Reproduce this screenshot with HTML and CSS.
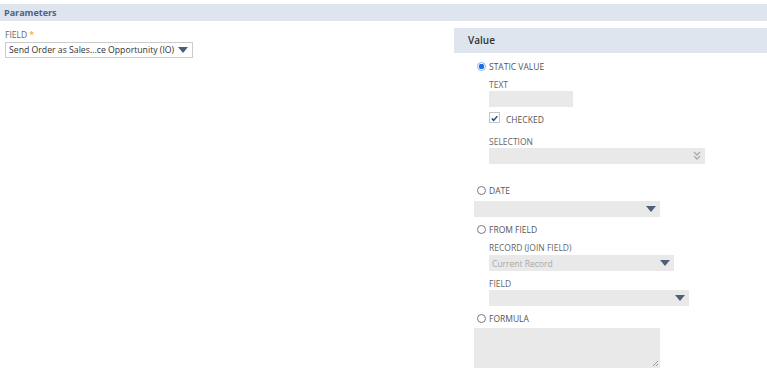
FILE: index.html
```html
<!DOCTYPE html>
<html lang="en">
<head>
    <meta charset="UTF-8">
    <title>Parameters</title>
    <link rel="stylesheet" href="styles.css">
</head>
<body>
    <!-- Section header -->
    <div class="section-bar">Parameters</div>

    <div class="columns">
        <!-- Left column: field picker -->
        <div class="left-col">
            <div class="label">FIELD <span class="req">*</span></div>
            <div class="select main-select">
                <span class="select-text">Send Order as Sales...ce Opportunity (IO)</span>
                <svg class="arrow" width="10" height="6" viewBox="0 0 10 6"><path d="M0 0H10L5 6Z" fill="#4d5f79"/></svg>
            </div>
        </div>

        <!-- Right column: value options -->
        <div class="right-col">
            <div class="value-head">Value</div>
            <div class="value-body">
                <div class="radio-row r-static">
                    <span class="radio checked"></span>
                    <span class="radio-label">STATIC VALUE</span>
                </div>
                <div class="indent">
                    <div class="label l-text">TEXT</div>
                    <div class="input w-text"></div>

                    <div class="check-row">
                        <span class="checkbox">
                            <svg width="11" height="11" viewBox="0 0 11 11"><path d="M2.2 5.6L4.4 7.8L9 2.6" stroke="#23468a" stroke-width="1.8" fill="none"/></svg>
                        </span>
                        <span class="check-label">CHECKED</span>
                    </div>

                    <div class="label l-selection">SELECTION</div>
                    <div class="select disabled w-selection">
                        <svg class="chevrons" width="8" height="9" viewBox="0 0 8 9"><path d="M1 1L4 4L7 1M1 5L4 8L7 5" stroke="#aaa" stroke-width="1.3" fill="none"/></svg>
                    </div>
                </div>

                <div class="radio-row r-date">
                    <span class="radio"></span>
                    <span class="radio-label">DATE</span>
                </div>
                <div class="select disabled w-date">
                    <svg class="arrow" width="10" height="6" viewBox="0 0 10 6"><path d="M0 0H10L5 6Z" fill="#4d5f79"/></svg>
                </div>

                <div class="radio-row r-from">
                    <span class="radio"></span>
                    <span class="radio-label">FROM FIELD</span>
                </div>
                <div class="indent">
                    <div class="label l-record">RECORD (JOIN FIELD)</div>
                    <div class="select disabled w-record">
                        <span class="placeholder">Current Record</span>
                        <svg class="arrow" width="10" height="6" viewBox="0 0 10 6"><path d="M0 0H10L5 6Z" fill="#4d5f79"/></svg>
                    </div>

                    <div class="label l-field">FIELD</div>
                    <div class="select disabled w-field">
                        <svg class="arrow" width="10" height="6" viewBox="0 0 10 6"><path d="M0 0H10L5 6Z" fill="#4d5f79"/></svg>
                    </div>
                </div>

                <div class="radio-row r-formula">
                    <span class="radio"></span>
                    <span class="radio-label">FORMULA</span>
                </div>
                <div class="textarea">
                    <svg class="grip" width="7" height="7" viewBox="0 0 7 7"><path d="M6 1L1 6M6 4L4 6" stroke="#999" stroke-width="1" fill="none"/></svg>
                </div>
            </div>
        </div>
    </div>
</body>
</html>
```

FILE: styles.css
```css
body {
    margin: 0;
    padding-top: 4px;
    font-family: "Open Sans", Arial, sans-serif;
    background: #fff;
    color: #333;
}

/* Section header bar */
.section-bar {
    height: 17px;
    line-height: 17px;
    background-color: #dfe5ef;
    color: #4a6285;
    font-size: 9px;
    font-weight: bold;
    padding-left: 4px;
}

.columns {
    display: flex;
}

.left-col {
    width: 449px;
    padding-left: 5px;
    padding-top: 8px;
}

.right-col {
    flex: 1;
    padding-top: 7px;
}

/* Labels */
.label {
    font-size: 8.5px;
    line-height: 12px;
    height: 12px;
    color: #666;
    text-transform: uppercase;
}

.req {
    color: #f39c12;
    font-size: 9px;
}

/* Selects and inputs */
.select {
    position: relative;
    height: 16px;
    box-sizing: border-box;
    display: flex;
    align-items: center;
}

.main-select {
    width: 188px;
    margin-top: 1px;
    border: 1px solid #ccc;
    padding-left: 3px;
}

.select-text {
    font-size: 8.7px;
    color: #333;
    white-space: nowrap;
}

.arrow {
    position: absolute;
    right: 4px;
    top: 5px;
}

.main-select .arrow {
    top: 4px;
}

.disabled {
    background-color: #e9e9e9;
    padding-left: 3px;
}

.placeholder {
    font-size: 8.5px;
    color: #a8a8a8;
}

.chevrons {
    position: absolute;
    right: 4px;
    top: 3px;
}

.input {
    height: 16px;
    background-color: #e9e9e9;
}

/* Value panel */
.value-head {
    height: 25px;
    line-height: 25px;
    background-color: #dfe5ef;
    padding-left: 14px;
    font-size: 10px;
    font-weight: 600;
    color: #333;
}

.value-body {
    padding-left: 20px;
}

.indent {
    padding-left: 15px;
}

.radio-row {
    display: flex;
    align-items: center;
    height: 14px;
}

.radio {
    width: 9px;
    height: 9px;
    box-sizing: border-box;
    border: 1px solid #777;
    border-radius: 50%;
    background: #fff;
    margin-left: 3px;
    margin-right: 3px;
}

.radio.checked {
    border: 1px solid #8db4ec;
    background: radial-gradient(circle, #1d6ee0 0, #1d6ee0 2.6px, #fff 3px);
}

.radio-label {
    font-size: 8.5px;
    color: #555;
}

.checkbox {
    width: 11px;
    height: 11px;
    box-sizing: border-box;
    border: 1px solid #c4c4c4;
    background: #fff;
    margin-top: 1px;
    display: flex;
}

.check-row {
    display: flex;
    height: 14px;
    margin-top: 4px;
}

.check-label {
    font-size: 8.5px;
    line-height: 14px;
    padding-top: 2px;
    padding-left: 6px;
    color: #555;
}

/* Vertical rhythm */
.r-static { margin-top: 6px; }
.l-text { margin-top: 6px; }
.w-text { width: 84px; }
.l-selection { margin-top: 11px; }
.w-selection { width: 216px; }
.r-date { margin-top: 19px; }
.w-date { width: 186px; margin-top: 4px; }
.r-from { margin-top: 5px; }
.l-record { margin-top: 6px; }
.w-record { width: 185px; margin-top: 1px; }
.l-field { margin-top: 7px; }
.w-field { width: 200px; }
.r-formula { margin-top: 5px; }

.textarea {
    position: relative;
    width: 186px;
    height: 40px;
    margin-top: 3px;
    background-color: #e9e9e9;
}

.grip {
    position: absolute;
    right: 1px;
    bottom: 1px;
}
```
